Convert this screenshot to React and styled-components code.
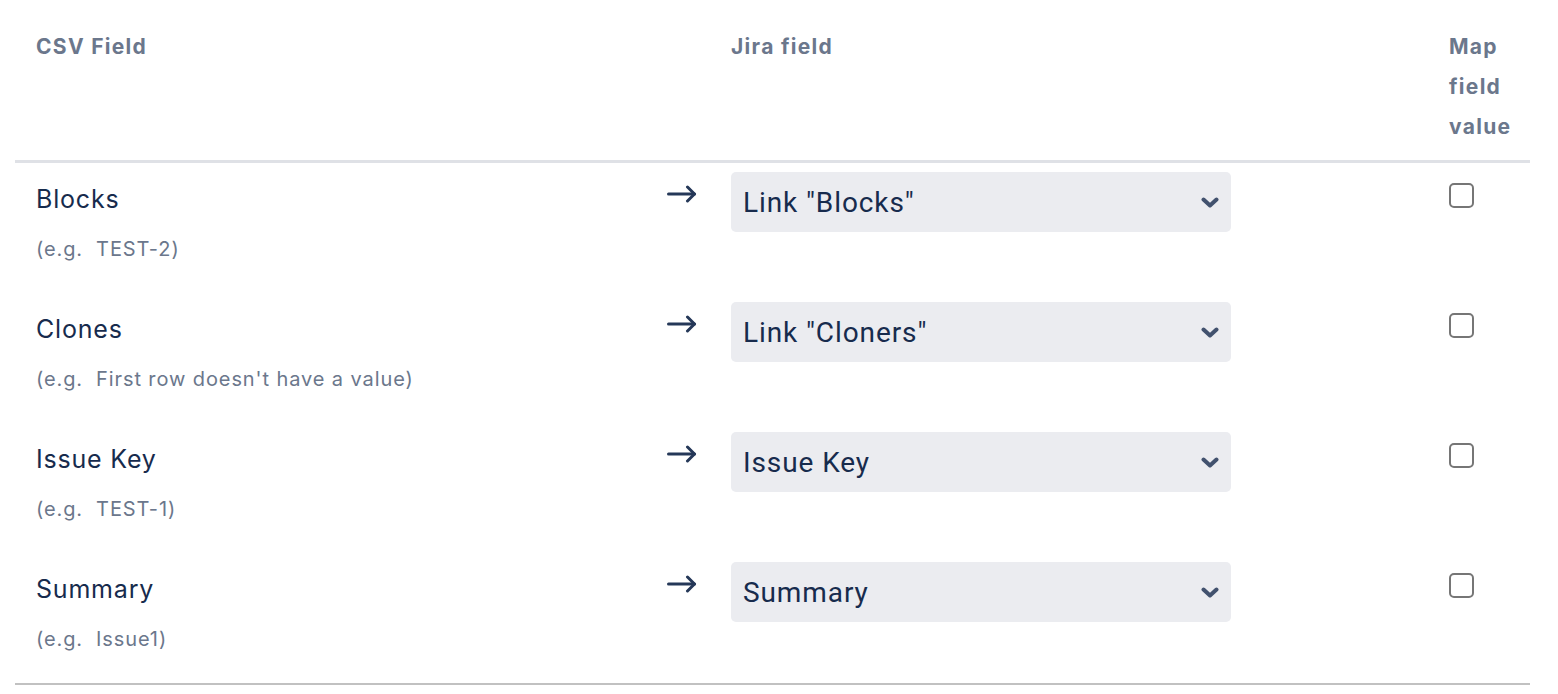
import React from "react";
import styled, { createGlobalStyle } from "styled-components";

const Global = createGlobalStyle`
  html, body { margin: 0; padding: 0; background: #ffffff; }
  body { font-family: Inter, "Noto Sans", sans-serif; }
`;

const Page = styled.div`
  padding: 0 28px 0 15px;
  width: 1558px;
  box-sizing: border-box;
`;

const Table = styled.div`
  display: grid;
  grid-template-columns: 695px 718px 1fr;
  border-bottom: 2px solid #c1c1c1;
`;

const HeadCell = styled.div`
  padding: 27px 0 13px 21px;
  font-size: 21px;
  font-weight: 700;
  letter-spacing: 1.3px;
  line-height: 40px;
  color: #6b778c;
  border-bottom: 3px solid #dfe1e6;
`;

const Cell = styled.div`
  padding: 10px 0 27px 21px;
  height: 130px;
  box-sizing: border-box;
  display: flex;
  ${(p) => p.$split && `justify-content: space-between;`}
`;

const SourceInfo = styled.div`
  display: flex;
  flex-direction: column;
`;

const FieldName = styled.div`
  font-size: 25px;
  letter-spacing: 0.8px;
  line-height: 52px;
  color: #172b4d;
`;

const Example = styled.div`
  margin-top: 6px;
  font-size: 20px;
  letter-spacing: 0.9px;
  line-height: 36px;
  color: #6b778c;
  white-space: pre;
`;

const ArrowBox = styled.div`
  padding: 12px 13px 0 0;
  color: #253858;
`;

const Select = styled.div`
  width: 500px;
  height: 60px;
  margin-top: -1px;
  box-sizing: border-box;
  background: #ebecf0;
  border-radius: 5px;
  display: flex;
  align-items: center;
  justify-content: space-between;
  padding: 0 12px 0 12px;
  font-family: Roboto, "Noto Sans", sans-serif;
  font-size: 28px;
  letter-spacing: 0.9px;
  color: #172b4d;
`;

const Checkbox = styled.div`
  width: 25px;
  height: 25px;
  margin-top: 10px;
  box-sizing: border-box;
  border: 2px solid #767676;
  border-radius: 5px;
  background: #fff;
`;

const Arrow = () => (
  <svg width="30" height="18" viewBox="0 0 30 18" fill="none">
    <path d="M1.5 9H27.5" stroke="currentColor" strokeWidth="3" strokeLinecap="round" />
    <path d="M20.5 2L27.5 9L20.5 16" stroke="currentColor" strokeWidth="3" strokeLinecap="round" strokeLinejoin="round" />
  </svg>
);

const Chevron = () => (
  <svg width="18" height="11" viewBox="0 0 18 11" fill="none">
    <path d="M2.5 2.5L9 8.5L15.5 2.5" stroke="#42526e" strokeWidth="4" strokeLinecap="round" strokeLinejoin="round" />
  </svg>
);

const rows = [
  { name: "Blocks", example: "TEST-2", jira: 'Link "Blocks"' },
  { name: "Clones", example: "First row doesn't have a value", jira: 'Link "Cloners"' },
  { name: "Issue Key", example: "TEST-1", jira: "Issue Key" },
  { name: "Summary", example: "Issue1", jira: "Summary" },
];

export default function App() {
  return (
    <Page>
      <Global />
      <Table>
        <HeadCell>CSV Field</HeadCell>
        <HeadCell>Jira field</HeadCell>
        <HeadCell>Map field value</HeadCell>
        {rows.map((r) => (
          <React.Fragment key={r.name}>
            <Cell $split>
              <SourceInfo>
                <FieldName>{r.name}</FieldName>
                <Example>{`(e.g.  ${r.example})`}</Example>
              </SourceInfo>
              <ArrowBox>
                <Arrow />
              </ArrowBox>
            </Cell>
            <Cell>
              <Select>
                <span>{r.jira}</span>
                <Chevron />
              </Select>
            </Cell>
            <Cell>
              <Checkbox />
            </Cell>
          </React.Fragment>
        ))}
      </Table>
    </Page>
  );
}
